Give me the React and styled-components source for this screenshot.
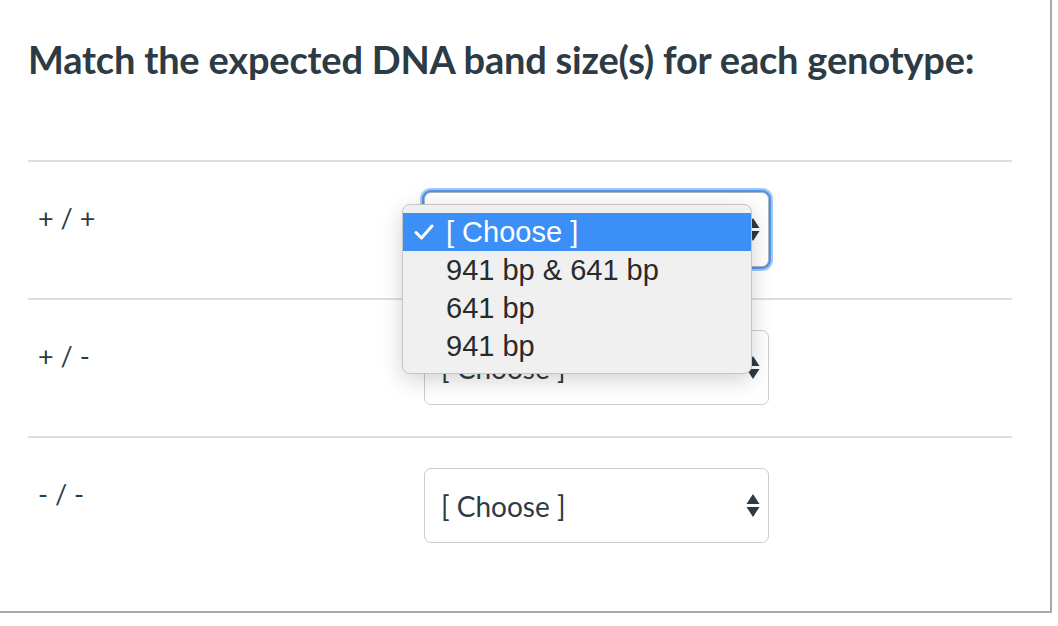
import React from 'react';
import styled, { createGlobalStyle } from 'styled-components';

const GlobalStyle = createGlobalStyle`
  body {
    margin: 0;
    background: #fff;
    font-family: Lato, "Open Sans", sans-serif;
  }
`

const rows = [
  { label: '+ / +', open: true },
  { label: '+ / -' },
  { label: '- / -' },
]

const options = ['[ Choose ]', '941 bp & 641 bp', '641 bp', '941 bp']

function Arrows() {
  return (
    <svg width="14" height="24" viewBox="0 0 14 24">
      <path d="M7 0 L13.5 10 L0.5 10 Z" fill="#2d3b45" />
      <path d="M0.5 13 L13.5 13 L7 23 Z" fill="#2d3b45" />
    </svg>
  )
}

function Check() {
  return (
    <svg width="20" height="16" viewBox="0 0 20 16">
      <path d="M2 8.5 L7.5 14 L18 2" fill="none" stroke="#fff" strokeWidth="3" strokeLinecap="round" strokeLinejoin="round" />
    </svg>
  )
}

function App() {
  return (
    <>
      <GlobalStyle />
      <Card>
        <Heading>Match the expected DNA band size(s) for each genotype:</Heading>
        <Rows>
          {rows.map((row) => (
            <Row key={row.label}>
              <Label>{row.label}</Label>
              <SelectWrap>
                <SelectBox focused={row.open}>
                  <SelectText>{row.open ? '' : '[ Choose ]'}</SelectText>
                  <Arrows />
                </SelectBox>
                {row.open && (
                  <Menu>
                    {options.map((opt, i) => (
                      <MenuItem key={opt} active={i === 0}>
                        <CheckSlot>{i === 0 && <Check />}</CheckSlot>
                        {opt}
                      </MenuItem>
                    ))}
                  </Menu>
                )}
              </SelectWrap>
            </Row>
          ))}
        </Rows>
      </Card>
    </>
  );
}

export default App

const Card = styled.div`
  width: 1052px;
  height: 613px;
  border-right: 2px solid #a9a9a9;
  border-bottom: 2px solid #a9a9a9;
  padding: 36px 40px 0 28px;
  box-sizing: border-box;
  background: #fff;
`

const Heading = styled.h2`
  margin: 0;
  font-family: Lato, sans-serif;
  font-weight: 700;
  font-size: 38px;
  line-height: 46px;
  color: #2d3b45;
  letter-spacing: -0.2px;
`

const Rows = styled.div`
  margin-top: 78px;
  width: 984px;
  border-top: 2px solid #dedede;
`

const Row = styled.div`
  display: flex;
  align-items: flex-start;
  height: 136px;
  border-bottom: 2px solid #dedede;
  &:last-child {
    border-bottom: none;
  }
`

const Label = styled.div`
  width: 396px;
  box-sizing: border-box;
  padding: 40px 0 0 10px;
  font-size: 27px;
  line-height: 32px;
  color: #2d3b45;
`

const SelectWrap = styled.div`
  position: relative;
  margin-top: 30px;
`

const SelectBox = styled.div`
  width: 345px;
  height: 75px;
  box-sizing: border-box;
  display: flex;
  align-items: center;
  justify-content: space-between;
  padding: 0 8px 0 16px;
  border: 1.5px solid ${(p) => (p.focused ? '#aab4bd' : '#c7cdd1')};
  border-radius: 7px;
  background: #fff;
  box-shadow: ${(p) => (p.focused ? '0 0 0 2px #4e92ef, 0 0 0 4px #a3c8f7' : 'none')};
`

const SelectText = styled.span`
  font-size: 28px;
  color: #2d3b45;
`

const Menu = styled.div`
  position: absolute;
  left: -22px;
  top: 12px;
  width: 350px;
  box-sizing: border-box;
  padding: 8px 0;
  background: #f0f0f1;
  border: 1px solid #c6c6c8;
  border-radius: 8px;
  box-shadow: 0 6px 22px rgba(0, 0, 0, 0.18);
  z-index: 2;
  font-family: "Liberation Sans", Arial, sans-serif;
`

const MenuItem = styled.div`
  display: flex;
  align-items: center;
  height: 38px;
  font-size: 29px;
  color: ${(p) => (p.active ? '#fff' : '#2a2a2a')};
  background: ${(p) => (p.active ? '#3b8ff6' : 'transparent')};
`

const CheckSlot = styled.span`
  display: inline-flex;
  width: 43px;
  padding-left: 11px;
  box-sizing: border-box;
`
